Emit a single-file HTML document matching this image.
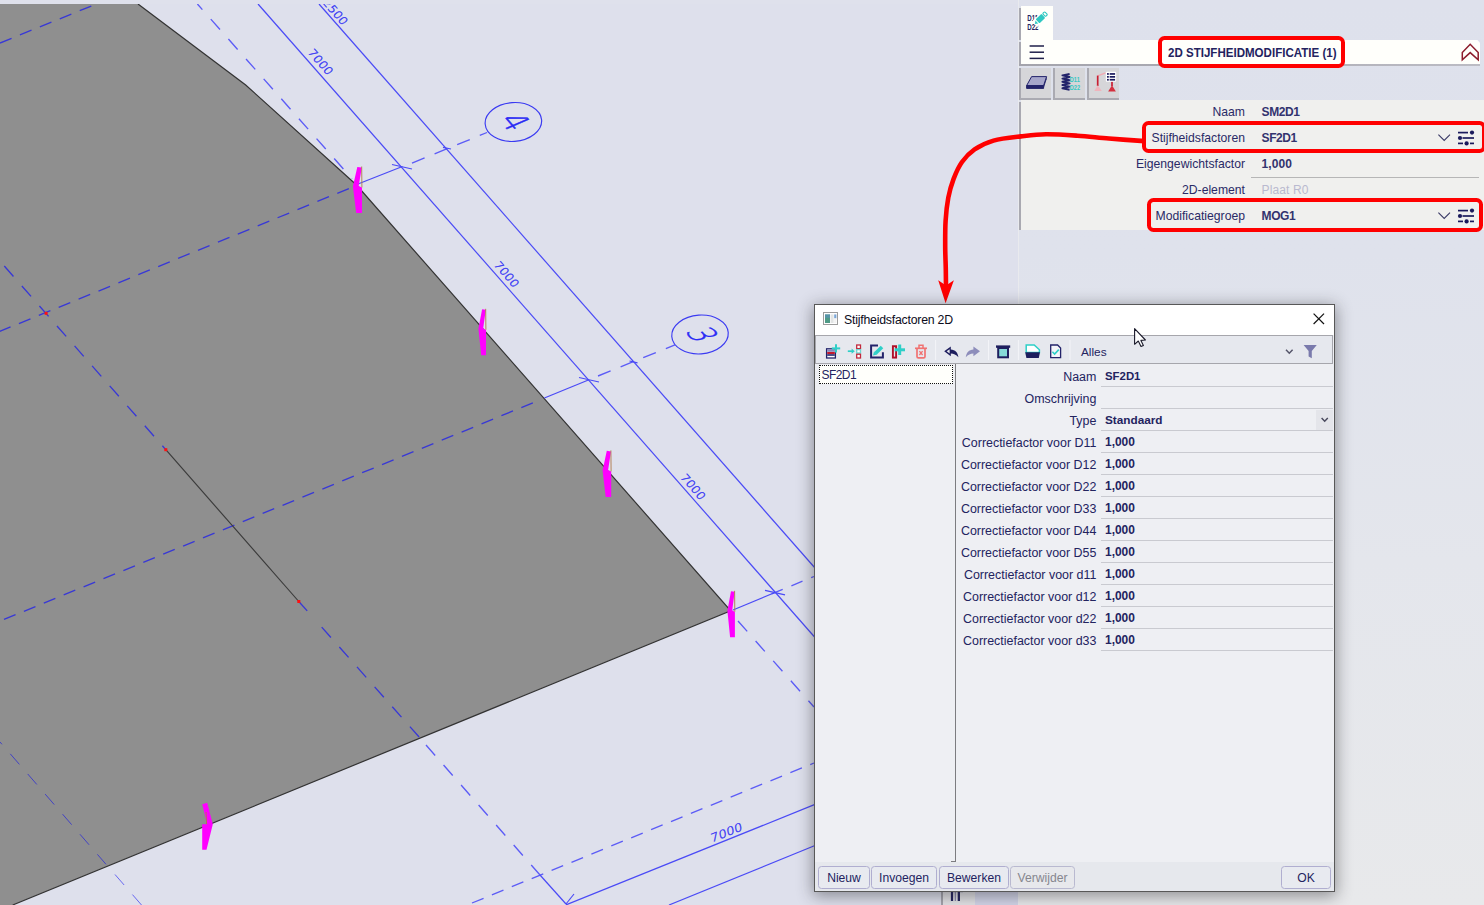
<!DOCTYPE html>
<html lang="nl">
<head>
<meta charset="utf-8">
<title>Stijfheidsfactoren 2D</title>
<style>
html,body{margin:0;padding:0;}
body{width:1484px;height:905px;overflow:hidden;position:relative;background:#dee0ec;font-family:"Liberation Sans",sans-serif;color:#23235f;}
.abs{position:absolute;}
#cad{position:absolute;left:0;top:0;width:1484px;height:905px;}
/* ---------- right property panel ---------- */
#vline{left:1018px;top:0;width:1px;height:905px;background:#e9eaee;}
.gbar{background:#a9a9b1;}
#tab{left:1021px;top:6px;width:32px;height:34px;background:#fffffb;}
#hdr{left:1021px;top:40px;width:459px;height:24px;background:#fffffb;}
#hdrsh{left:1019px;top:64px;width:461px;height:2px;background:linear-gradient(to right,#a4a4ac 0%,#a9a9b1 30%,#bcbcc4 100%);}
.tbtn{top:68px;width:30px;height:30px;background:#d6d6d9;border-left:2px solid #aaaab2;border-bottom:2px solid #aaaab2;box-sizing:content-box;}
#props{left:1021px;top:100px;width:463px;height:130px;background:#f0f0ee;}
.plab{position:absolute;right:239px;font-size:12.2px;line-height:14px;white-space:nowrap;color:#2a2a66;}
.pval{position:absolute;left:1261.6px;font-size:12px;line-height:14px;font-weight:bold;white-space:nowrap;color:#33336e;letter-spacing:-0.45px;}
.redbox{position:absolute;border:4.5px solid #ff0000;border-radius:6.5px;box-sizing:border-box;}
/* ---------- dialog ---------- */
#dlg{left:814px;top:304px;width:521px;height:588px;box-sizing:border-box;border:1px solid #585858;background:#eeeff3;box-shadow:0 3px 15px 1px rgba(30,30,36,0.45);}
#dtitle{left:0;top:0;width:519px;height:30px;background:#ffffff;}
#dtool{left:0px;top:30px;width:516px;height:27px;background:#e6e8ee;border:1px solid #a6a6ac;}
.dlab{position:absolute;margin-top:-0.3px;right:237.6px;font-size:12.45px;line-height:14px;white-space:nowrap;color:#23235f;}
.dval{position:absolute;margin-top:0.5px;left:290px;font-size:11.95px;line-height:14px;font-weight:bold;white-space:nowrap;color:#23235f;}
.dul{position:absolute;left:286px;width:232px;height:1px;background:#c9cad0;}
.dbtn{position:absolute;top:561px;height:23px;padding-top:1px;box-sizing:border-box;border:1px solid #b0aed0;border-radius:3.5px;background:#e8eaf0;font-size:12.15px;line-height:21px;text-align:center;color:#23235f;}
</style>
</head>
<body>
<!-- ================= CAD VIEW ================= -->
<svg id="cad" width="1484" height="905" viewBox="0 0 1484 905">
  <!-- slab -->
  <polygon points="0,4 138,4 245.7,85 356.5,185 730.7,610.8 12.7,905 0,905" fill="#8f8f8f"/>
  <polyline points="138,4 245.7,85 356.5,185 730.7,610.8 12.7,905" fill="none" stroke="#333333" stroke-width="1.2"/>
  <g fill="none" stroke="#3535ee" stroke-width="1.3">
    <!-- dashed grid lines inside slab -->
    <g stroke="#3838d6" stroke-width="1.35" stroke-dasharray="12.5 9">
      <line x1="0" y1="43" x2="95" y2="4.5"/>
      <line x1="-1" y1="331.7" x2="354" y2="186.5"/>
      <line x1="4" y1="619.4" x2="541" y2="399.5"/>
    </g>
    <g stroke="#3838d6" stroke-width="1.35" stroke-dasharray="13.9 12.7">
      <line x1="4.3" y1="266" x2="165.8" y2="449.7"/>
      <line x1="298.8" y1="601.5" x2="307.2" y2="610.9" stroke-dasharray="none"/>
      <line x1="321.7" y1="627.1" x2="419.5" y2="737.5"/>
    </g>
    <line x1="0" y1="742" x2="106" y2="864.3" stroke="#3a3ac8" stroke-width="0.9" stroke-dasharray="13.9 12.7" stroke-dashoffset="10.9"/>
    <line x1="115" y1="874.5" x2="141.5" y2="905" stroke="#5a5af0" stroke-width="0.9" stroke-dasharray="13.9 12.7"/>
    <!-- dashed outside slab -->
    <g stroke="#5c5cf6" stroke-width="1.35" stroke-dasharray="13.9 12.7">
      <line x1="197.4" y1="4" x2="352" y2="178.7" stroke-dasharray="13.9 12.7" stroke-dashoffset="6.4"/>
      <line x1="738" y1="621" x2="814" y2="707"/>
      <line x1="426" y1="745" x2="540" y2="875"/>
    </g>
    <g stroke="#5c5cf6" stroke-width="1.35" stroke-dasharray="12.5 9">
      <line x1="412" y1="163.1" x2="487" y2="132.5" stroke-dasharray="13.6 10.8"/>
      <line x1="598" y1="376" x2="675" y2="344.8" stroke-dasharray="13.6 10.8"/>
      <line x1="771.6" y1="593.9" x2="814" y2="576.5" stroke-dasharray="12 9.4"/>
      <line x1="472" y1="903" x2="814" y2="763"/>
    </g>
    <!-- solid dimension lines -->
    <g stroke="#4a4af6" stroke-width="1.2">
      <line x1="258" y1="4" x2="815" y2="637.5"/>
      <line x1="319" y1="4" x2="815" y2="568"/>
      <line x1="358" y1="184" x2="402.4" y2="166.5"/>
      <line x1="544.4" y1="398" x2="589" y2="379.7"/>
      <line x1="733" y1="610" x2="775" y2="592.5"/>
      <line x1="392" y1="164.5" x2="412" y2="169"/>
      <line x1="579" y1="377.5" x2="599" y2="382"/>
      <line x1="765" y1="590.3" x2="785" y2="594.8"/>
      <line x1="443" y1="147.3" x2="451" y2="149"/>
      <line x1="629.5" y1="361" x2="637.5" y2="362.8"/>
      <line x1="540" y1="875" x2="566" y2="904"/>
      <line x1="566" y1="904.9" x2="815" y2="804.4"/>
      <line x1="669" y1="905" x2="815" y2="845.5"/>
      <line x1="566" y1="904" x2="574" y2="894"/>
    </g>
    <!-- grid bubbles -->
    <ellipse cx="513.4" cy="122" rx="28.3" ry="19.4" stroke="#3a3af2" stroke-width="1.15" transform="rotate(-4 513.4 122)"/>
    <ellipse cx="700" cy="334.5" rx="28.3" ry="19.4" stroke="#3a3af2" stroke-width="1.15" transform="rotate(-4 700 334.5)"/>
  </g>
  <!-- dark rib line -->
  <line x1="165.8" y1="449.7" x2="298.8" y2="601.5" stroke="#3a3a3a" stroke-width="1.1"/>
  <!-- red nodes -->
  <g fill="#ff1010">
    <rect x="44.6" y="311.8" width="3" height="3"/>
    <rect x="164.3" y="448.2" width="3" height="3"/>
    <rect x="297.3" y="600" width="3" height="3"/>
  </g>
  <!-- magenta support markers -->
  <g fill="#ff00ff">
    <polygon points="357.3,166.9 361.8,167.5 358.7,186.0 362.0,187.6 362.0,213.0 356.2,213.0 352.9,186.5"/>
    <polygon points="482.1,309.2 485.8,309.8 483.2,328.3 486.0,329.9 486.0,355.3 481.2,355.3 478.4,328.8"/>
    <polygon points="606.8,450.8 611.0,451.4 608.1,469.9 611.2,471.5 611.2,496.9 605.7,496.9 602.6,470.4"/>
    <polygon points="731.0,591.2 734.7,591.8 732.2,610.3 734.9,611.9 734.9,637.3 730.1,637.3 727.4,610.8"/>
    <polygon points="202.2,804.3 207.2,802.8 212.8,824.2 206.5,849.7 202.2,849.7 202.2,824.2 207.2,824.2"/>
  </g>
  <g stroke="#b07848" stroke-width="0.9" fill="none">
    <line x1="361.7" y1="166.5" x2="361.9" y2="187.5"/>
    <line x1="485.7" y1="308.8" x2="485.9" y2="329.8"/>
    <line x1="610.9" y1="450.4" x2="611.1" y2="471.4"/>
    <line x1="734.6" y1="590.8" x2="734.8" y2="611.8"/>
    <line x1="206" y1="812" x2="206.6" y2="824"/>
  </g>
  <!-- dimension texts (lying in the model plane) -->
  <g font-family="'DejaVu Sans','Liberation Sans',sans-serif" font-weight="200" font-size="12" letter-spacing="0.1" fill="#4444f4" stroke="#4444f4" stroke-width="0.55">
    <text transform="matrix(0.661,0.750,-0.75,0.52,322,2.6)">2500</text>
    <text transform="matrix(0.661,0.750,-0.75,0.52,307.2,52.6)">7000</text>
    <text transform="matrix(0.661,0.750,-0.75,0.52,493.3,265)">7000</text>
    <text transform="matrix(0.661,0.750,-0.75,0.52,679.8,477.5)">7000</text>
    <text transform="matrix(0.927,-0.375,0.149,0.862,711.6,842.6)" font-size="13" letter-spacing="0.15">7000</text>
  </g>
  <g font-family="'DejaVu Sans','Liberation Sans',sans-serif" font-weight="200" font-size="33" fill="#2a2af5" stroke="#2a2af5" stroke-width="0.55">
    <text transform="matrix(0.533,0.628,-0.923,0.399,498.8,119.8)">4</text>
    <text transform="matrix(0.42,0.477,-0.88,0.203,684.6,331.2)" font-size="40">3</text>
  </g>
  <rect x="0" y="0" width="1484" height="4" fill="#dfe1ec"/>
</svg>

<!-- ================= RIGHT PANEL ================= -->
<div class="abs" style="left:1019px;top:0px;width:465px;height:905px;background:linear-gradient(to bottom,#dee1ec 0%,#dfe2ec 28%,#e4e6ec 62%,#e8e9eb 100%);"></div>
<div id="vline" class="abs"></div>
<div class="abs gbar" style="left:1019px;top:7.5px;width:2px;height:32.5px;"></div>
<div class="abs gbar" style="left:1019px;top:42px;width:2px;height:24px;"></div>
<div class="abs gbar" style="left:1019px;top:102px;width:2px;height:128px;"></div>
<div id="tab" class="abs">
  <svg class="abs" style="left:5px;top:5px" width="24" height="22" viewBox="0 0 24 22">
    <g font-family="'Liberation Sans',sans-serif" font-size="8.3" font-weight="bold" fill="#23235f">
      <text transform="translate(1.2,10.4) scale(0.74,1)">D11</text>
      <text transform="translate(1.2,18.8) scale(0.74,1)">D22</text>
    </g>
    <g transform="translate(8.9,12.9) rotate(-44)">
      <rect x="-0.6" y="-3.9" width="17" height="7.8" fill="#fffffb"/>
      <polygon points="0,0 2.7,-2 2.7,2" fill="#2ec8c2"/>
      <rect x="3.7" y="-2.8" width="8" height="5.6" rx="0.9" fill="#2ec8c2"/>
      <rect x="12.7" y="-2.1" width="2.8" height="4.2" rx="1" fill="#fffffb" stroke="#2ec8c2" stroke-width="1.1"/>
    </g>
  </svg>
</div>
<div id="hdr" class="abs"></div>
<div id="hdrsh" class="abs"></div>
<svg class="abs" style="left:1475px;top:39px" width="6" height="6" viewBox="0 0 6 6"><polygon points="1.5,0 6,0 6,5" fill="#dee0ec"/></svg>
<!-- hamburger -->
<svg class="abs" style="left:1028px;top:43px" width="18" height="18" viewBox="0 0 18 18">
  <g stroke="#1f1f4a" stroke-width="1.5"><line x1="1.6" y1="3" x2="16" y2="3"/><line x1="1.6" y1="9.2" x2="16" y2="9.2"/><line x1="1.6" y1="15.4" x2="16" y2="15.4"/></g>
</svg>
<!-- collapse double chevron -->
<svg class="abs" style="left:1458px;top:40px" width="24" height="24" viewBox="1458 40 24 24">
  <polygon points="1462.3,59.9 1462.3,52.6 1470.2,44.3 1478.2,52.6 1478.2,59.9 1470.2,52.6" fill="none" stroke="#8c1c2c" stroke-width="1.5" stroke-linejoin="miter"/>
</svg>
<!-- toolbar buttons -->
<div class="abs tbtn" style="left:1019.2px;"></div>
<div class="abs tbtn" style="left:1053px;"></div>
<div class="abs tbtn" style="left:1087px;"></div>
<svg class="abs" style="left:1024px;top:71px" width="26" height="24" viewBox="0 0 26 24">
  <polygon points="2.6,14.6 7.6,5.6 22.6,5.6 19.6,14.6" fill="#a6a6ca" stroke="#23236a" stroke-width="1"/>
  <polygon points="2.6,14.6 19.6,14.6 19.6,17.4 2.6,17.4" fill="#23236a" stroke="#23236a" stroke-width="1"/>
  <polygon points="19.6,14.6 22.6,5.6 22.6,8.2 19.6,17.4" fill="#23236a"/>
</svg>
<svg class="abs" style="left:1058px;top:71px" width="26" height="24" viewBox="0 0 26 24">
  <polyline points="11.6,3 4.4,4.4 11.6,6 4.4,7.6 11.6,9.2 4.4,10.8 11.6,12.4 4.4,14 11.6,15.6 4.4,17.2 11.6,18.8" fill="none" stroke="#23236a" stroke-width="1.9" stroke-linejoin="round"/>
  <g font-family="'Liberation Sans',sans-serif" font-size="8" font-weight="bold" fill="#35c6c2"><text transform="translate(11.8,10.6) scale(0.7,1)">D11</text><text transform="translate(11.8,18.5) scale(0.7,1)">D22</text></g>
</svg>
<svg class="abs" style="left:1092px;top:70px" width="26" height="28" viewBox="0 0 26 28">
  <line x1="5.7" y1="5.9" x2="13.6" y2="2.9" stroke="#f2aab2" stroke-width="1.5"/>
  <line x1="5.7" y1="5.6" x2="5.7" y2="16" stroke="#c81e32" stroke-width="1.7"/>
  <polygon points="5.7,15.2 9.8,21.1 2.3,21.1" fill="#f0b4bc"/>
  <line x1="20" y1="11.6" x2="20" y2="16" stroke="#c81e32" stroke-width="1.7"/>
  <polygon points="20,15.2 23.9,21.4 16.1,21.4" fill="#d4303f"/>
  <rect x="13.8" y="1.8" width="10.4" height="10" rx="1" fill="#ffffff"/>
  <g fill="#1a1a5c"><rect x="15" y="3.1" width="1.8" height="1.7"/><rect x="17.7" y="3.1" width="5.4" height="1.7"/><rect x="15" y="6" width="1.8" height="1.7"/><rect x="17.7" y="6" width="5.4" height="1.7"/><rect x="15" y="8.9" width="1.8" height="1.7"/><rect x="17.7" y="8.9" width="5.4" height="1.7"/></g>
</svg>
<!-- property grid -->
<div id="props" class="abs"></div>
<div class="abs" style="left:1251px;top:176.5px;width:228px;height:1.6px;background:#b6b6b6;"></div>
<div class="plab" style="top:105px;">Naam</div>
<div class="plab" style="top:131px;">Stijfheidsfactoren</div>
<div class="plab" style="top:157px;">Eigengewichtsfactor</div>
<div class="plab" style="top:183px;">2D-element</div>
<div class="plab" style="top:209px;">Modificatiegroep</div>
<div class="pval" style="top:105px;">SM2D1</div>
<div class="pval" style="top:131px;">SF2D1</div>
<div class="pval" style="top:157px;letter-spacing:0.05px;">1,000</div>
<div class="pval" style="top:183px;color:#b9b9cf;font-weight:normal;letter-spacing:0.1px;">Plaat R0</div>
<div class="pval" style="top:209px;">MOG1</div>
<!-- dropdown chevrons + slider icons -->
<svg class="abs" style="left:1436px;top:130px" width="46" height="16" viewBox="0 0 46 16">
  <polyline points="2.4,4.6 8.2,10.4 14,4.6" fill="none" stroke="#3a3a66" stroke-width="1.1"/>
  <g stroke="#1a1a5c" stroke-width="1.7"><line x1="22" y1="2.6" x2="32" y2="2.6"/><line x1="26.5" y1="8" x2="38" y2="8"/><line x1="22" y1="13.4" x2="27" y2="13.4"/><line x1="34" y1="13.4" x2="38" y2="13.4"/></g>
  <g fill="#1a1a5c"><circle cx="36" cy="2.6" r="2.1"/><circle cx="24" cy="8" r="2.1"/><circle cx="30.6" cy="13.4" r="2.1"/></g>
</svg>
<svg class="abs" style="left:1436px;top:208px" width="46" height="16" viewBox="0 0 46 16">
  <polyline points="2.4,4.6 8.2,10.4 14,4.6" fill="none" stroke="#3a3a66" stroke-width="1.1"/>
  <g stroke="#1a1a5c" stroke-width="1.7"><line x1="22" y1="2.6" x2="32" y2="2.6"/><line x1="26.5" y1="8" x2="38" y2="8"/><line x1="22" y1="13.4" x2="27" y2="13.4"/><line x1="34" y1="13.4" x2="38" y2="13.4"/></g>
  <g fill="#1a1a5c"><circle cx="36" cy="2.6" r="2.1"/><circle cx="24" cy="8" r="2.1"/><circle cx="30.6" cy="13.4" r="2.1"/></g>
</svg>
<!-- header title + red annotation boxes -->
<div class="redbox" style="left:1158px;top:36px;width:187px;height:32px;background:#fffffb;"></div>
<div class="abs" id="ttl" style="left:1168px;top:45.6px;font-size:12.6px;line-height:14px;font-weight:bold;color:#23235f;white-space:nowrap;transform-origin:0 0;transform:scaleX(0.917);">2D STIJFHEIDMODIFICATIE (1)</div>
<div class="redbox" style="left:1142px;top:121.3px;width:344.2px;height:32px;"></div>
<div class="redbox" style="left:1147px;top:197.6px;width:335.6px;height:34.8px;"></div>
<!-- red arrow -->
<svg class="abs" style="left:920px;top:120px" width="230" height="190" viewBox="920 120 230 190">
  <path d="M1144.5,141.1 C1138.6,140.7 1120.2,139.4 1109.0,138.5 C1097.8,137.6 1088.0,136.4 1077.5,135.7 C1067.0,135.0 1055.5,134.2 1046.0,134.3 C1036.5,134.4 1029.5,135.4 1020.8,136.4 C1012.0,137.4 1001.2,138.4 993.5,140.6 C985.8,142.8 979.9,145.8 974.6,149.4 C969.4,153.0 965.5,157.1 962.0,162.0 C958.5,166.9 955.9,172.9 953.6,178.8 C951.3,184.8 949.6,190.7 948.3,197.7 C947.0,204.7 946.1,212.8 945.6,220.8 C945.1,228.9 945.2,237.8 945.2,246.0 C945.2,254.2 945.7,263.3 945.8,270.0 C945.9,276.7 946.0,283.3 946.0,286.0" fill="none" stroke="#ff0000" stroke-width="4.6"/>
  <polygon points="945.6,303.3 938.2,280.2 946,285.6 953.9,280.2" fill="#ff0000"/>
</svg>

<!-- ================= bits visible under the dialog ================= -->
<div class="abs" style="left:975px;top:891px;width:43px;height:14px;background:#d3d5e8;"></div>
<div class="abs" style="left:943px;top:891px;width:32px;height:14px;background:#e3e3e6;"></div>
<div class="abs" style="left:941px;top:891px;width:2px;height:14px;background:#a4a4ac;"></div>
<svg class="abs" style="left:948px;top:891px" width="18" height="14" viewBox="948 891 18 14"><g fill="#23235f"><rect x="950.9" y="891" width="2.2" height="10"/><rect x="957.7" y="891" width="2.3" height="10"/><rect x="954.8" y="891" width="0.9" height="10" fill="#6a6a9a"/><rect x="953" y="891" width="10" height="1.1"/></g></svg>

<!-- ================= DIALOG ================= -->
<div id="dlg" class="abs">
  <div id="dtitle" class="abs"></div>
  <svg class="abs" style="left:8px;top:7px" width="16" height="14" viewBox="0 0 16 14">
    <rect x="0.5" y="0.5" width="14" height="12" fill="#ffffff" stroke="#9c9c9c" stroke-width="1"/>
    <rect x="2" y="2.4" width="5" height="8.6" fill="#4f9a86"/>
    <rect x="2" y="2.4" width="5" height="3.4" fill="#5f8fc4" opacity="0.55"/>
    <rect x="7.6" y="2.4" width="3" height="8.6" fill="#e2e4e4"/>
    <rect x="11.2" y="2.4" width="2.2" height="4" fill="#7aa6d6"/>
    <rect x="11.2" y="6.4" width="2.2" height="4.6" fill="#f2f2f2"/>
  </svg>
  <div class="abs" style="left:29px;top:8px;font-size:12.3px;line-height:14px;color:#0c0c1c;white-space:nowrap;letter-spacing:-0.22px;">Stijfheidsfactoren 2D</div>
  <svg class="abs" style="left:497px;top:7px" width="14" height="14" viewBox="0 0 14 14"><g stroke="#111" stroke-width="1.2"><line x1="1.6" y1="1.6" x2="12" y2="12"/><line x1="12" y1="1.6" x2="1.6" y2="12"/></g></svg>
  <div id="dtool" class="abs"></div>
  <svg class="abs" style="left:1px;top:31px" width="518" height="28" viewBox="816 336 518 28">
    <!-- new -->
    <rect x="826.6" y="348.8" width="8.8" height="9.2" fill="#ffffff" stroke="#23236a" stroke-width="1.3"/>
    <rect x="827.2" y="349.4" width="7.6" height="2.4" fill="#8888bb"/>
    <rect x="827.2" y="352" width="7.6" height="2" fill="#c4182c"/>
    <rect x="827.2" y="354.2" width="7.6" height="1.6" fill="#23236a"/>
    <g stroke="#2ecfc8" stroke-width="2"><line x1="831.8" y1="348.4" x2="840.2" y2="348.4"/><line x1="836" y1="344.2" x2="836" y2="352.6"/></g>
    <!-- insert -->
    <g stroke="#2ecfc8" stroke-width="1.7" fill="none"><line x1="847.8" y1="351.2" x2="853" y2="351.2"/></g>
    <polygon points="851.6,348.6 854.8,351.2 851.6,353.8" fill="#2ecfc8"/>
    <rect x="856.7" y="345" width="3.8" height="3.6" fill="#fff" stroke="#c2283c" stroke-width="1.3"/>
    <rect x="856.7" y="349.6" width="3.8" height="3.4" fill="#fff" stroke="#6fd6d2" stroke-width="1.3"/>
    <rect x="856.7" y="354.2" width="3.8" height="3.8" fill="#fff" stroke="#c2283c" stroke-width="1.3"/>
    <!-- edit -->
    <polyline points="878,345.5 871.1,345.5 871.1,357.4 882.9,357.4 882.9,352.2" fill="none" stroke="#23236a" stroke-width="2"/>
    <line x1="882" y1="347" x2="875.6" y2="353.2" stroke="#2ecfc8" stroke-width="3.6"/>
    <polygon points="873,355.4 874,351.6 877.2,354.6" fill="#2ecfc8"/>
    <!-- add column -->
    <rect x="892.9" y="346.2" width="3.2" height="11.4" fill="none" stroke="#b01028" stroke-width="1.9"/>
    <g stroke="#2ecfc8" stroke-width="3"><line x1="894.6" y1="349.8" x2="905" y2="349.8"/><line x1="899.7" y1="344.5" x2="899.7" y2="355"/></g>
    <!-- delete -->
    <g fill="none" stroke="#f07272" stroke-width="1.7">
      <line x1="915" y1="348.3" x2="927" y2="348.3"/>
      <polyline points="919,348 919,345.2 923,345.2 923,348" stroke-width="1.5"/>
      <path d="M917,349 L917,356.4 Q917,357.8 918.4,357.8 L923.6,357.8 Q925,357.8 925,356.4 L925,349"/>
      <line x1="919.4" y1="351.2" x2="922.6" y2="355" stroke-width="1.3"/><line x1="922.6" y1="351.2" x2="919.4" y2="355" stroke-width="1.3"/>
    </g>
    <line x1="935.6" y1="340" x2="935.6" y2="360" stroke="#f3f4f8" stroke-width="1"/>
    <!-- undo -->
    <path d="M944.2,351.3 L950.8,346.6 L950.8,349.4 C955.2,349.6 958,352.6 958.4,357.2 C956,354.6 953.8,353.6 950.8,353.5 L950.8,356.2 Z" fill="#1e1e5e"/>
    <path d="M946.6,351.3 L949.6,349.2 L949.6,353.4 Z" fill="#e6e8ee"/>
    <!-- redo (disabled) -->
    <path d="M980,351.3 L973.4,346.6 L973.4,349.4 C969,349.6 966.2,352.6 965.8,357.2 C968.2,354.6 970.4,353.6 973.4,353.5 L973.4,356.2 Z" fill="#8d8dbb"/>
    <line x1="988.5" y1="340" x2="988.5" y2="360" stroke="#f3f4f8" stroke-width="1"/>
    <!-- window -->
    <rect x="996" y="345.4" width="14.2" height="2.4" fill="#1e1e5e"/>
    <rect x="998.2" y="348" width="9.8" height="9.3" fill="#86dad8" stroke="#1e1e5e" stroke-width="2"/>
    <line x1="1018.4" y1="340" x2="1018.4" y2="360" stroke="#f3f4f8" stroke-width="1"/>
    <!-- open -->
    <path d="M1026.2,352.4 L1026.2,345 L1034.2,345 L1039.4,349.8 L1039.4,352.4 Z" fill="#ffffff" stroke="#2ecfc8" stroke-width="1.5"/>
    <path d="M1025.2,352.2 L1040,352.2 L1038.8,358 L1026.4,358 Z" fill="#1e1e5e"/>
    <!-- check doc -->
    <path d="M1050.7,345 L1057.6,345 L1060.6,348 L1060.6,357.7 L1050.7,357.7 Z" fill="#f4f5f9" stroke="#23236a" stroke-width="1.3"/>
    <polyline points="1052.4,351.8 1054.6,354 1058.8,349.6" fill="none" stroke="#2ecfc8" stroke-width="1.6"/>
    <line x1="1070" y1="340" x2="1070" y2="360" stroke="#f3f4f8" stroke-width="1"/>
    <!-- combo chevron + filter -->
    <polyline points="1286,349.8 1289.3,353.2 1292.6,349.8" fill="none" stroke="#55556a" stroke-width="1.5"/>
    <path d="M1303.6,345 L1316.8,345 L1311.8,351 L1311.8,358.2 L1308.6,356.4 L1308.6,351 Z" fill="#7a7aac"/>
  </svg>
  <div class="abs" style="left:266px;top:40px;font-size:11.8px;line-height:14px;color:#23235f;">Alles</div>
  <!-- list pane -->
  <div class="abs" style="left:4px;top:60px;width:134px;height:19px;box-sizing:border-box;border:1px dotted #111;background:#fffffb;"></div>
  <div class="abs" style="left:6.5px;top:63px;font-size:12px;line-height:14px;color:#23235f;white-space:nowrap;letter-spacing:-0.55px;">SF2D1</div>
  <div class="abs" style="left:140px;top:59px;width:1px;height:498px;background:#7c7c80;"></div>
  <div class="abs" style="left:136px;top:556px;width:5px;height:1px;background:#7c7c80;"></div>
  <!-- property rows -->
  <div id="rows">
  <div class="dlab" style="top:65px;">Naam</div><div class="dval" style="top:63px;font-size:11.4px;">SF2D1</div><div class="dul" style="top:81px;"></div>
  <div class="dlab" style="top:87px;">Omschrijving</div><div class="dul" style="top:103px;"></div>
  <div class="dlab" style="top:109px;">Type</div><div class="dval" style="top:107px;font-size:11.75px;">Standaard</div><div class="dul" style="top:125px;"></div>
  <div class="dlab" style="top:131px;">Correctiefactor voor D11</div><div class="dval" style="top:129px;">1,000</div><div class="dul" style="top:147px;"></div>
  <div class="dlab" style="top:153px;">Correctiefactor voor D12</div><div class="dval" style="top:151px;">1,000</div><div class="dul" style="top:169px;"></div>
  <div class="dlab" style="top:175px;">Correctiefactor voor D22</div><div class="dval" style="top:173px;">1,000</div><div class="dul" style="top:191px;"></div>
  <div class="dlab" style="top:197px;">Correctiefactor voor D33</div><div class="dval" style="top:195px;">1,000</div><div class="dul" style="top:213px;"></div>
  <div class="dlab" style="top:219px;">Correctiefactor voor D44</div><div class="dval" style="top:217px;">1,000</div><div class="dul" style="top:235px;"></div>
  <div class="dlab" style="top:241px;">Correctiefactor voor D55</div><div class="dval" style="top:239px;">1,000</div><div class="dul" style="top:257px;"></div>
  <div class="dlab" style="top:263px;">Correctiefactor voor d11</div><div class="dval" style="top:261px;">1,000</div><div class="dul" style="top:279px;"></div>
  <div class="dlab" style="top:285px;">Correctiefactor voor d12</div><div class="dval" style="top:283px;">1,000</div><div class="dul" style="top:301px;"></div>
  <div class="dlab" style="top:307px;">Correctiefactor voor d22</div><div class="dval" style="top:305px;">1,000</div><div class="dul" style="top:323px;"></div>
  <div class="dlab" style="top:329px;">Correctiefactor voor d33</div><div class="dval" style="top:327px;">1,000</div><div class="dul" style="top:345px;"></div>
  </div>
  <!-- Type dropdown button -->
  <div class="abs" style="left:501px;top:105px;width:17px;height:20px;background:#e4e5ea;"></div>
  <svg class="abs" style="left:504px;top:110px" width="12" height="10" viewBox="0 0 12 10"><polyline points="2.6,3 5.7,6.2 8.8,3" fill="none" stroke="#4a4a5e" stroke-width="1.5"/></svg>
  <!-- buttons -->
  <div class="abs" style="left:0;top:557px;width:519px;height:29px;background:#e6e8ed;"></div>
  <div class="dbtn" style="left:3px;width:52px;">Nieuw</div>
  <div class="dbtn" style="left:56px;width:66px;">Invoegen</div>
  <div class="dbtn" style="left:124px;width:70px;">Bewerken</div>
  <div class="dbtn" style="left:195px;width:65px;color:#86868e;background:#e7e8ec;border-color:#b9b9d0;">Verwijder</div>
  <div class="dbtn" style="left:466px;width:50px;">OK</div>
</div>
<!-- mouse cursor -->
<svg class="abs" style="left:1130px;top:324px" width="20" height="26" viewBox="1130 324 20 26">
  <path d="M1134.6,328.6 L1134.6,344.3 L1138.3,341 L1141,346.5 L1143.4,345.4 L1140.9,340.4 L1145.4,340 Z" fill="#ffffff" stroke="#1a1a2a" stroke-width="1.1" stroke-linejoin="round"/>
</svg>
</body>
</html>
